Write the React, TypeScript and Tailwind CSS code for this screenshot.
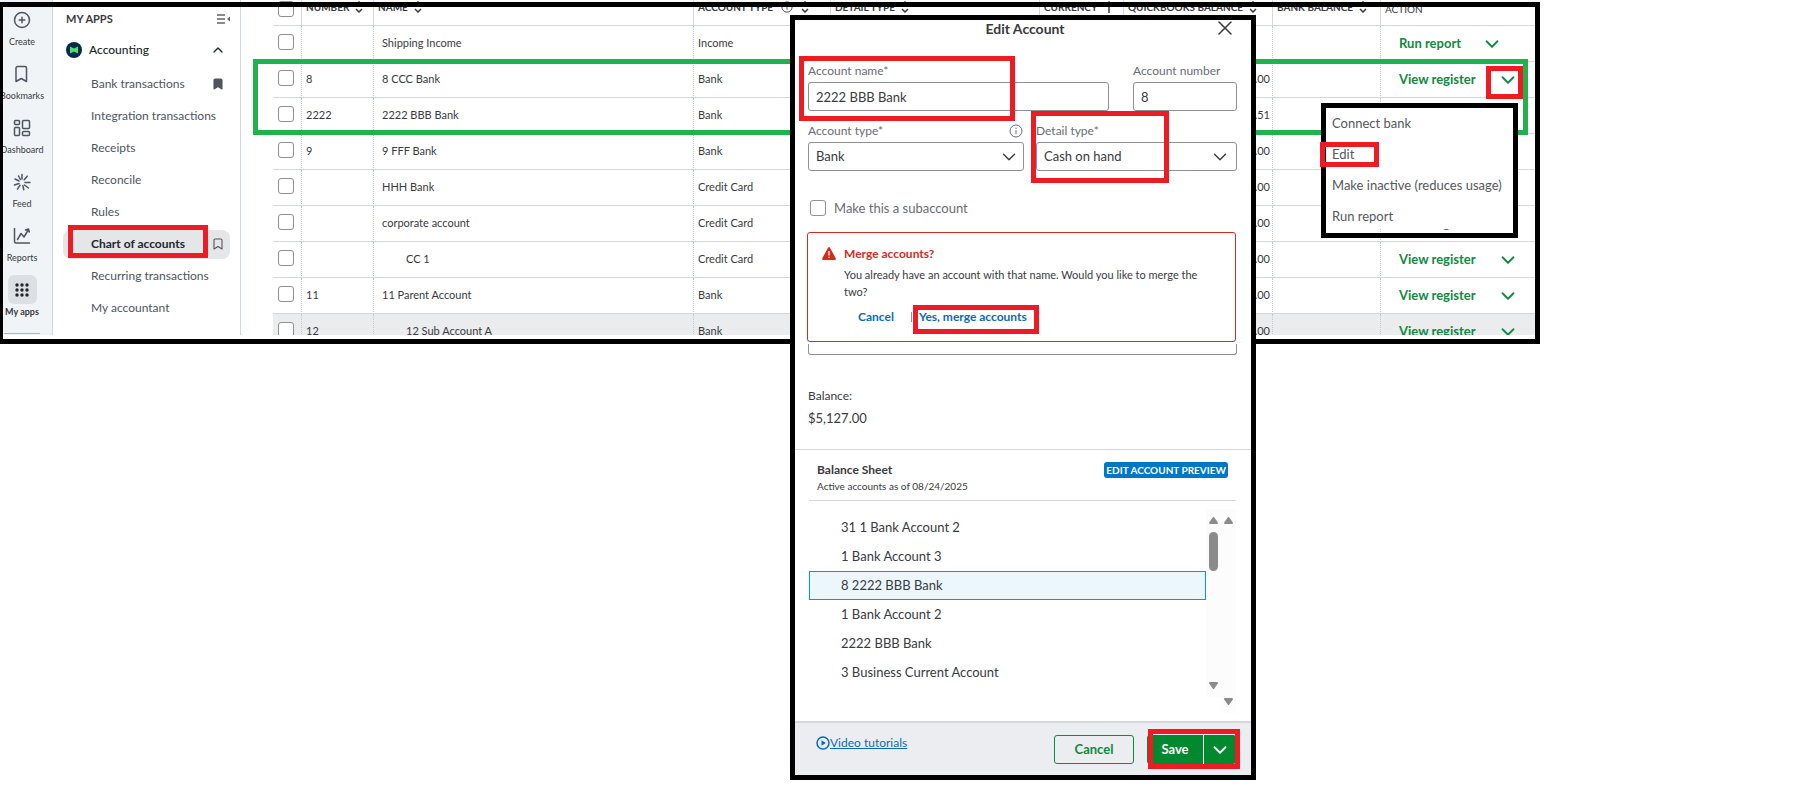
import type { ReactNode } from 'react'
import clsx from 'clsx'
import { ChevronDown, ChevronUp, X } from 'lucide-react'

const navItems = [
  'Bank transactions',
  'Integration transactions',
  'Receipts',
  'Reconcile',
  'Rules',
  'Chart of accounts',
  'Recurring transactions',
  'My accountant',
]

const rows = [
  { number: '', name: 'Shipping Income', type: 'Income', balance: '', action: 'Run report' },
  { number: '8', name: '8 CCC Bank', type: 'Bank', balance: '.00', action: 'View register' },
  { number: '2222', name: '2222 BBB Bank', type: 'Bank', balance: '.51', action: 'View register' },
  { number: '9', name: '9 FFF Bank', type: 'Bank', balance: '.00', action: 'View register' },
  { number: '', name: 'HHH Bank', type: 'Credit Card', balance: '.00', action: 'View register' },
  { number: '', name: 'corporate account', type: 'Credit Card', balance: '.00', action: 'View register' },
  { number: '', name: 'CC 1', type: 'Credit Card', balance: '.00', action: 'View register', sub: true },
  { number: '11', name: '11 Parent Account', type: 'Bank', balance: '.00', action: 'View register' },
  { number: '12', name: '12 Sub Account A', type: 'Bank', balance: '.00', action: 'View register', sub: true, hover: true },
]

const previewAccounts = [
  '31 1 Bank Account 2',
  '1 Bank Account 3',
  '8 2222 BBB Bank',
  '1 Bank Account 2',
  '2222 BBB Bank',
  '3 Business Current Account',
]

function Mark({ className }: { className: string }) {
  return (
    <span
      className={clsx('pointer-events-none absolute z-10 border-5 border-[#ed1c24]', className)}
    />
  )
}

function BookmarkIcon({ className, filled }: { className: string; filled?: boolean }) {
  return (
    <svg
      viewBox="0 0 14 16"
      className={className}
      fill={filled ? 'currentColor' : 'none'}
      stroke="currentColor"
      strokeWidth="1.5"
      strokeLinejoin="round"
    >
      <path d="M3 1h8a1.6 1.6 0 0 1 1.6 1.6V15L7 11.6 1.4 15V2.6A1.6 1.6 0 0 1 3 1z" />
    </svg>
  )
}

function InfoIcon({ className }: { className: string }) {
  return (
    <svg viewBox="0 0 14 14" className={className} fill="none" stroke="currentColor">
      <circle cx="7" cy="7" r="6" />
      <path d="M7 6.2v4M7 3.7v1.2" />
    </svg>
  )
}

function SortIcon() {
  return (
    <svg
      viewBox="0 0 8 12"
      className="h-3 w-2 shrink-0"
      fill="none"
      stroke="currentColor"
      strokeWidth="1.5"
    >
      <path d="M1 4l3-3 3 3M1 8l3 3 3-3" />
    </svg>
  )
}

function RailItem({ label, active, children }: { label: string; active?: boolean; children: ReactNode }) {
  return (
    <a
      href="#"
      className={clsx(
        'flex h-[54px] w-[60px] shrink-0 flex-col items-center text-[9px] leading-3 text-[#393a3d]',
        active && 'font-bold',
      )}
    >
      <span
        className={clsx(
          'flex size-[29px] items-center justify-center rounded-md text-[#4d5560]',
          active && 'bg-[#dce0e4] text-[#21262b]',
        )}
      >
        <svg
          viewBox="0 0 18 18"
          className="size-[18px]"
          fill="none"
          stroke="currentColor"
          strokeWidth="1.5"
          strokeLinecap="round"
          strokeLinejoin="round"
        >
          {children}
        </svg>
      </span>
      <span className="mt-0.5">{label}</span>
    </a>
  )
}

function Rail() {
  return (
    <nav className="flex w-[53px] shrink-0 justify-center overflow-hidden border-r border-[#d0d8df] bg-[#f0f4f7] pr-2">
      <div className="flex w-[60px] shrink-0 flex-col items-center pt-[5px]">
        <RailItem label="Create">
          <circle cx="9" cy="9" r="7.5" />
          <path d="M9 6.2v5.6M6.2 9h5.6" />
        </RailItem>
        <RailItem label="Bookmarks">
          <path d="M4.500 1.500h7.500a1.500 1.500 0 0 1 1.500 1.500v13.500L8.300 13.500 3 16.500V3a1.500 1.500 0 0 1 1.500-1.500z" />
        </RailItem>
        <RailItem label="Dashboard">
          <rect x="1.5" y="1.5" width="5" height="4" rx="1" />
          <rect x="9.5" y="1.5" width="7" height="8" rx="1" />
          <rect x="1.5" y="8.5" width="5" height="8" rx="1" />
          <rect x="9.5" y="12.5" width="7" height="4" rx="1" />
        </RailItem>
        <RailItem label="Feed">
          <path d="M9 6V1.500M11.200 6.800l3-3.600M12 9.500h5M11.400 12l4 3M9.800 12.800l1 4M7 12.200l-2.500 4M6 10.500l-4.500 1.500M6 8L2 6M7.500 6.500L5.500 3" />
        </RailItem>
        <RailItem label="Reports">
          <path d="M1.500 1.500v13a1.500 1.500 0 0 0 1.500 1.500h13.500M4.500 12.500l3.500-6 3 3.500 4.500-7.500M12.500 3l3-1 .8 3" />
        </RailItem>
        <RailItem label="My apps" active>
          <g fill="currentColor" stroke="none">
            {[4, 9, 14].map((y) =>
              [4, 9, 14].map((x) => <circle key={`${x}-${y}`} cx={x} cy={y} r="1.7" />),
            )}
          </g>
        </RailItem>
        <div className="mt-1 h-px w-9 bg-[#a9b5c0]" />
      </div>
    </nav>
  )
}

function AppsMenu() {
  return (
    <nav className="relative w-[188px] shrink-0 overflow-hidden border-r border-[#d0d8df] px-2.5">
      <div className="mt-2.5 flex h-[18px] items-center justify-between pl-[3px] text-[11px] font-bold text-[#393a3d]">
        MY APPS
        <svg viewBox="0 0 13 10" className="h-2.5 w-[13px]" fill="none" stroke="#5c6570" strokeWidth="1.5">
          <path d="M0 1h8M0 5h8M0 9h8" />
          <path d="M13 2.500v5L10 5z" fill="#5c6570" stroke="none" />
        </svg>
      </div>
      <button className="mt-3 flex h-5 w-full items-center pr-1 pl-[3px] text-[12px] font-medium text-[#21262b]">
        <svg viewBox="0 0 16 16" className="mr-[7px] size-4">
          <circle cx="8" cy="8" r="8" fill="#03294d" />
          <path d="M4 4.500l4 2 4-2v7l-4-2-4 2z" fill="#4ce06b" />
        </svg>
        Accounting
        <ChevronUp className="ml-auto size-4" />
      </button>
      <ul className="mt-2">
        {navItems.map((item) => {
          const active = item === 'Chart of accounts'
          return (
            <li key={item} className="flex h-8 items-center">
              <a
                href="#"
                className={clsx(
                  'flex h-[29px] w-full items-center justify-between rounded-lg pr-[7px] pl-7 text-[12px] whitespace-nowrap text-[#4d5560]',
                  active && 'bg-[#e4e6e8] font-bold text-[#21262b]',
                )}
              >
                {item}
                {item === 'Bank transactions' && <BookmarkIcon filled className="h-3 w-2.5" />}
                {active && <BookmarkIcon className="h-3 w-2.5 text-[#4d5560]" />}
              </a>
            </li>
          )
        })}
      </ul>
      <Mark className="top-[225px] left-[15px] h-[33px] w-[140px]" />
    </nav>
  )
}

const th = 'h-[26px] border-r border-b border-[#d4d7dc] p-0 pb-3 pl-1 text-left align-middle font-bold'
const td = 'border-r border-b border-r-[#c4c7cc] border-b-[#d4d7dc] [border-right-style:dotted] p-0 pl-1'
const checkbox = 'block size-4 appearance-none rounded-[3px] border border-[#8d9096] bg-white'

function AccountsTable() {
  return (
    <table className="w-full table-fixed border-separate border-spacing-0 text-[11px] text-[#393a3d]">
      <colgroup>
        <col className="w-[29px]" />
        <col className="w-[72px]" />
        <col />
        <col className="w-[137px]" />
        <col className="w-[209px]" />
        <col className="w-[84px]" />
        <col className="w-[149px]" />
        <col className="w-[108px]" />
        <col className="w-[154px]" />
      </colgroup>
      <thead>
        <tr className="text-[10px] leading-3 whitespace-nowrap">
          <th className="border-r border-b border-[#d4d7dc] p-0 pb-2 pl-[5px]">
            <input type="checkbox" aria-label="Select all accounts" className={checkbox} />
          </th>
          <th className={th}>
            <span className="flex items-center gap-1.5">NUMBER <SortIcon /></span>
          </th>
          <th className={th}>
            <span className="flex items-center gap-1.5">NAME <SortIcon /></span>
          </th>
          <th className={th}>
            <span className="flex items-center gap-2">
              ACCOUNT TYPE <InfoIcon className="size-3" /> <SortIcon />
            </span>
          </th>
          <th className={th}>
            <span className="flex items-center gap-1.5">DETAIL TYPE <SortIcon /></span>
          </th>
          <th className={th}>
            <span className="flex items-center gap-2">
              CURRENCY
              <svg viewBox="0 0 8 12" className="h-3 w-2" fill="none" stroke="currentColor" strokeWidth="1.5">
                <path d="M4 12V1M1 4l3-3 3 3" />
              </svg>
            </span>
          </th>
          <th className={th}>
            <span className="flex items-center gap-1.5">QUICKBOOKS BALANCE <SortIcon /></span>
          </th>
          <th className={th}>
            <span className="flex items-center gap-1.5">BANK BALANCE <SortIcon /></span>
          </th>
          <th className="border-b border-[#d4d7dc] p-0 pb-2 pl-1 text-left font-normal">ACTION</th>
        </tr>
      </thead>
      <tbody>
        {rows.map((row) => (
          <tr key={row.name} className={clsx('h-9', row.hover && 'bg-[#ebecee]')}>
            <td className="border-r border-b border-r-[#c4c7cc] border-b-[#d4d7dc] [border-right-style:dotted] p-0 pb-[3px] pl-[5px]">
              <input type="checkbox" aria-label={`Select ${row.name}`} className={checkbox} />
            </td>
            <td className={td}>{row.number}</td>
            <td className={td}>
              <span className={row.sub ? 'pl-7' : 'pl-1'}>{row.name}</span>
            </td>
            <td className={td}>{row.type}</td>
            <td className={td} />
            <td className={td} />
            <td className={clsx(td, 'pr-0.5 text-right')}>{row.balance}</td>
            <td className={td} />
            <td className="border-b border-[#d4d7dc] p-0 pl-[18px]">
              <div className="flex items-center text-[13px] font-bold text-[#108a3e]">
                <a href="#" className={row.action === 'Run report' ? 'w-[82px]' : 'w-[98px]'}>
                  {row.action}
                </a>
                <button aria-label={`More actions for ${row.name}`}>
                  <ChevronDown className="size-5.5" />
                </button>
              </div>
            </td>
          </tr>
        ))}
      </tbody>
    </table>
  )
}

function ActionMenu() {
  return (
    <div className="absolute top-[103px] right-[22px] z-10 h-[135px] w-[197px] border-5 border-black">
      <ul className="flex h-[121px] flex-col bg-white pl-1.5 text-[13px] text-[#55575c]">
        {['Connect bank', 'Edit', 'Make inactive (reduces usage)', 'Run report'].map((item) => (
          <li key={item} className="h-[31px] shrink-0">
            <button className="flex h-full items-center whitespace-nowrap">{item}</button>
          </li>
        ))}
      </ul>
      <Mark className="top-[34px] -left-1.5 h-[25px] w-[59px]" />
    </div>
  )
}

const field = 'h-[29px] w-full appearance-none rounded-[3px] border border-[#8d9096] bg-white px-[7px] text-[13px] text-[#393a3d]'
const label = 'flex h-[22px] items-center text-[12px] text-[#6b6c72]'

function ScrollArrow({ down }: { down?: boolean }) {
  return (
    <svg viewBox="0 0 9 7" className={clsx('h-[7px] w-[9px]', down && 'rotate-180')} fill="#8b8b8b">
      <path d="M3.700.6q.8-1 1.600 0L8.800 5.600Q9.200 7 8 7H1Q-.2 7 .2 5.600z" />
    </svg>
  )
}

function EditAccount() {
  return (
    <section className="absolute top-[15px] left-[790px] z-20 flex h-[765px] w-[466px] flex-col border-5 border-black bg-white text-[#393a3d]">
      <header className="relative flex h-[40px] justify-center pl-1">
        <h2 className="text-[14px] leading-[17px] font-bold">Edit Account</h2>
        <button aria-label="Close" className="absolute -top-1 right-3.5">
          <X className="size-6" strokeWidth={1.5} />
        </button>
      </header>

      <form className="px-[13px]">
        <div className="flex gap-6 pr-px">
          <div className="flex-1">
            <label htmlFor="account-name" className={label}>Account name*</label>
            <input id="account-name" defaultValue="2222 BBB Bank" className={field} />
          </div>
          <div className="w-[104px]">
            <label htmlFor="account-number" className={label}>Account number</label>
            <input id="account-number" defaultValue="8" className={field} />
          </div>
        </div>
        <div className="mt-[9px] flex gap-3 pr-px">
          <div className="w-[216px]">
            <div className="flex items-center justify-between">
              <label htmlFor="account-type" className={label}>Account type*</label>
              <InfoIcon className="mr-px size-3.5 text-[#6b6c72]" />
            </div>
            <div className="relative">
              <select id="account-type" className={field}>
                <option>Bank</option>
              </select>
              <ChevronDown className="pointer-events-none absolute top-1 right-1 size-5.5" strokeWidth={1.5} />
            </div>
          </div>
          <div className="flex-1">
            <label htmlFor="detail-type" className={label}>Detail type*</label>
            <div className="relative">
              <select id="detail-type" className={field}>
                <option>Cash on hand</option>
              </select>
              <ChevronDown className="pointer-events-none absolute top-1 right-1.5 size-5.5" strokeWidth={1.5} />
            </div>
          </div>
        </div>
        <label className="mt-[29px] flex items-center gap-2 pl-0.5 text-[13px] leading-4 text-[#6b6c72]">
          <input type="checkbox" className={checkbox} />
          Make this a subaccount
        </label>

        <div className="relative mt-4 mr-0.5 -ml-px h-[110px] rounded-[3px] border border-[#d52b1e] bg-white pt-3 pl-[14px] text-[12px] leading-[17px]">
          <div className="flex gap-2">
            <svg viewBox="0 0 14 13" className="mt-0.5 h-[13px] w-3.5 shrink-0">
              <path d="M6 .7q1-1.400 2 0l5.700 10.500Q14.300 13 12.700 13H1.300Q-.3 13 .3 11.200z" fill="#d52b1e" />
              <path d="M7 4v4.500M7 9.800v1.200" stroke="#fff" strokeWidth="1.3" />
            </svg>
            <div>
              <h3 className="font-bold text-[#d52b1e]">Merge accounts?</h3>
              <p className="mt-1 pr-3 text-[11px] leading-[17px]">
                You already have an account with that name. Would you like to merge the two?
              </p>
              <div className="mt-2 flex items-center font-bold text-[#0b6bb5]">
                <button type="button" className="ml-3.5 w-[53px] text-left">Cancel</button>
                <span className="mr-[7px] h-2.5 w-px bg-[#8d9096]" />
                <button type="button">Yes, merge accounts</button>
              </div>
            </div>
          </div>
        </div>
        <div className="mt-0.5 mr-px h-[11px] rounded-b-[3px] border border-t-0 border-[#8d9096]" />
      </form>

      <div className="mt-[33px] px-[13px]">
        <p className="text-[12px] leading-4">Balance:</p>
        <p className="mt-1.5 text-[13px] leading-4">$5,127.00</p>
      </div>

      <div className="mt-[23px] border-t border-[#d4d7dc] pr-[15px] pl-[14px]">
        <div className="flex h-[51px] items-start justify-between border-b border-[#d4d7dc] pt-3 pr-2 pl-2">
          <div>
            <h3 className="text-[12px] leading-4 font-bold">Balance Sheet</h3>
            <p className="text-[10px] leading-4">Active accounts as of 08/24/2025</p>
          </div>
          <span className="rounded-[3px] bg-[#0077c5] px-0.5 text-[10px] leading-4 font-bold text-white">
            EDIT ACCOUNT PREVIEW
          </span>
        </div>
        <div className="flex pt-2">
          <ul className="mt-1 h-[184px] flex-1 overflow-hidden text-[13px]">
            {previewAccounts.map((account) => (
              <li
                key={account}
                className={clsx(
                  'flex h-[29px] items-center border pl-[31px]',
                  account === '8 2222 BBB Bank'
                    ? 'border-[#0097e6] bg-[#ebf7fd]'
                    : 'border-transparent',
                )}
              >
                {account}
              </li>
            ))}
          </ul>
          <div className="flex h-[188px] w-[15px] flex-col items-center bg-[#fcfcfc] py-2">
            <ScrollArrow />
            <span className="mt-2 h-[39px] w-[9px] rounded-full bg-[#8b8b8b]" />
            <span className="mt-auto"><ScrollArrow down /></span>
          </div>
          <div className="flex h-[204px] w-[15px] flex-col items-center justify-between bg-[#fcfcfc] py-2">
            <ScrollArrow />
            <ScrollArrow down />
          </div>
        </div>
      </div>

      <footer className="mt-auto flex h-[54px] items-start border-t-2 border-[#d4d7dc] bg-[#ecedf1] pt-3 pr-[15px] pl-[21px]">
        <a href="#" className="flex items-center text-[12px] leading-4 text-[#0b6bb5] underline">
          <svg viewBox="0 0 14 14" className="size-3.5" fill="none" stroke="currentColor" strokeWidth="1.5">
            <circle cx="7" cy="7" r="6" />
            <path d="M5.500 4.200v5.600L9.800 7z" fill="currentColor" stroke="none" />
          </svg>
          Video tutorials
        </a>
        <button className="ml-auto h-[29px] w-20 rounded-[3px] border border-[#108a3e] text-[13px] font-bold text-[#108a3e]">
          Cancel
        </button>
        <div className="ml-[13px] flex h-[29px] w-[89px] rounded-[3px] bg-[#00892e] text-white">
          <button className="flex-1 border-r border-white text-[13px] font-bold">Save</button>
          <button aria-label="More save options" className="flex w-8 items-center justify-center">
            <ChevronDown className="size-5.5" />
          </button>
        </div>
      </footer>

      <Mark className="top-[36px] left-1 h-[65px] w-[216px]" />
      <Mark className="top-[91px] left-[236px] h-[72px] w-[138px]" />
      <Mark className="top-[285px] left-[118px] h-[29px] w-[126px]" />
      <Mark className="top-[709px] left-[353px] h-10 w-[92px]" />
    </section>
  )
}

export default function App() {
  return (
    <main className="relative min-h-screen overflow-hidden bg-white font-['Lato',sans-serif]">
      <div className="relative mr-[263px] h-[344px]">
        <div className="flex h-[335px] overflow-hidden pr-[5px]">
          <Rail />
          <AppsMenu />
          <div className="min-w-0 flex-1 pl-8">
            <AccountsTable />
          </div>
        </div>
        <div className="pointer-events-none absolute inset-x-0 top-0.5 bottom-0 border-5 border-l-3 border-black" />
        <div className="pointer-events-none absolute top-[59px] right-3 left-[253px] h-[76px] border-5 border-[#22b14c]" />
        <Mark className="top-[66px] right-[17px] h-[33px] w-[37px]" />
        <ActionMenu />
      </div>
      <EditAccount />
    </main>
  )
}
